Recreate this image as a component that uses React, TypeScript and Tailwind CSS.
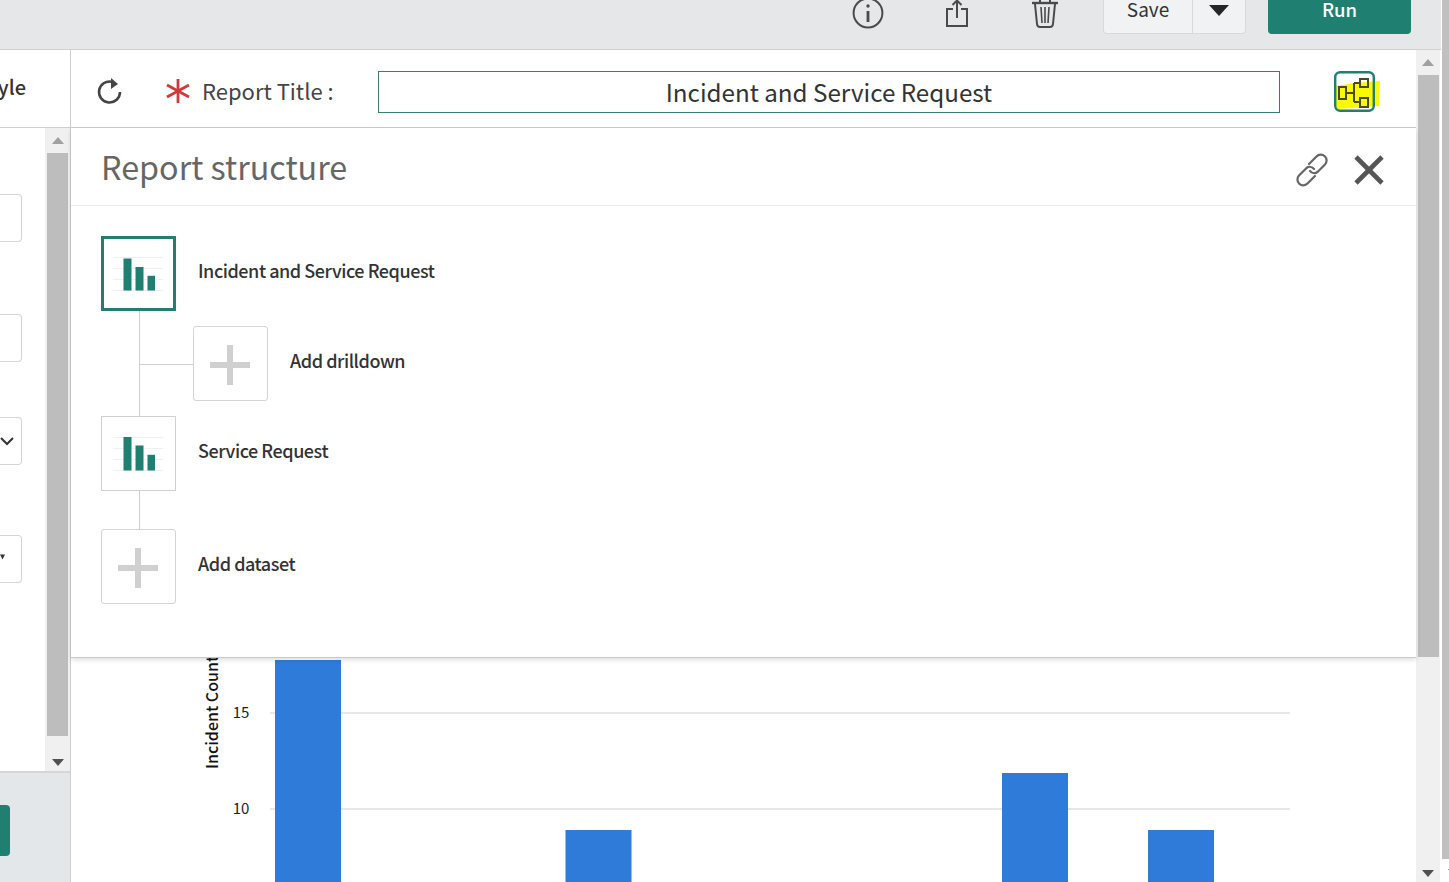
const font = { fontFamily: '"Noto Sans CJK SC", "Source Sans Pro", sans-serif' };

function ChartGlyph({ bars }: { bars: number[] }) {
  return (
    <svg width="56" height="56" viewBox="0 0 56 56">
      <g stroke="#f0f0f0" strokeWidth="1">
        <line x1="2" y1="11.5" x2="52" y2="11.5" />
        <line x1="2" y1="22.5" x2="52" y2="22.5" />
        <line x1="2" y1="33.5" x2="52" y2="33.5" />
        <line x1="2" y1="44.5" x2="52" y2="44.5" />
      </g>
      <rect x="12.5" y={44.5 - bars[0]} width="8" height={bars[0]} fill="#1f7f70" />
      <rect x="24.5" y={44.5 - bars[1]} width="8" height={bars[1]} fill="#1f7f70" />
      <rect x="36.5" y={44.5 - bars[2]} width="7.5" height={bars[2]} fill="#1f7f70" />
    </svg>
  );
}

function PlusGlyph() {
  return (
    <svg width="40" height="40" viewBox="0 0 40 40">
      <rect x="0" y="17" width="40" height="6" fill="#d0d0d0" />
      <rect x="17" y="0" width="6" height="40" fill="#d0d0d0" />
    </svg>
  );
}

function ScrollArrow({ up, className }: { up?: boolean; className?: string }) {
  return (
    <svg width="12" height="7" viewBox="0 0 12 7" className={className}>
      <path d={up ? 'M0 7 L6 0 L12 7 Z' : 'M0 0 L6 7 L12 0 Z'} fill={up ? '#a0a0a0' : '#505050'} />
    </svg>
  );
}

function LeftField({ children, mt }: { children?: React.ReactNode; mt: string }) {
  return (
    <div className={`${mt} flex h-[48px] w-[22px] items-center justify-end rounded-r-[4px] border border-l-0 border-[#d4d4d4] bg-white`}>
      {children}
    </div>
  );
}

function NodeLabel({ children }: { children: React.ReactNode }) {
  return <span className="ml-[22px] pb-[7px] text-[18px] font-medium leading-none tracking-[-0.45px]">{children}</span>;
}

export default function App() {
  return (
    <div className="flex h-[882px] w-[1449px] overflow-hidden bg-white text-[#333]" style={font}>
      <div className="flex w-[1441px] shrink-0 flex-col">
        {/* top toolbar, cut by the top of the window */}
        <header className="flex h-[50px] shrink-0 items-end justify-end border-b border-[#cfd1d3] bg-[#e6e7e9] pb-[15px] pr-[30px]">
          <div className="mb-[2px] mr-[44px] flex h-[32px] items-end gap-[61px]">
            <svg width="32" height="32" viewBox="0 0 32 32" fill="none" stroke="#4a4a4a" strokeWidth="2">
              <circle cx="16" cy="13" r="14.4" />
              <line x1="16" y1="11" x2="16" y2="22" strokeWidth="2.8" />
              <circle cx="16" cy="6" r="1.7" fill="#4a4a4a" stroke="none" />
            </svg>
            <svg width="24" height="32" viewBox="0 0 24 32" fill="none" stroke="#4a4a4a" strokeWidth="2">
              <path d="M8 9 H2 V26 H22 V9 H16" />
              <path d="M12 18 V1 M7.5 5 L12 0.5 L16.5 5" />
            </svg>
            <svg width="28" height="32" viewBox="0 0 28 32" fill="none" stroke="#4a4a4a" strokeWidth="2" className="ml-px">
              <path d="M1 3 H27" strokeWidth="2.4" />
              <path d="M9 3 V0 M19 3 V0" />
              <path d="M4 4 L6 24 Q6.3 27 9 27 H19 Q21.7 27 22 24 L24 4" />
              <path d="M10 7 L11 23 M14 7 V23 M18 7 L17 23" strokeWidth="1.6" />
            </svg>
          </div>
          <div className="flex h-[40px] w-[143px] items-stretch rounded-b-[4px] border border-t-0 border-[#d8d9db] bg-[#f1f2f3] text-[19px] leading-none text-[#333]">
            <div className="flex w-[89px] items-center justify-center border-r border-[#d8d9db] pb-[10px]">Save</div>
            <div className="flex flex-1 items-center justify-center pb-[6px]">
              <svg width="20" height="11" viewBox="0 0 20 11">
                <path d="M0 0 H20 L10 11 Z" fill="#262626" />
              </svg>
            </div>
          </div>
          <div className="ml-[22px] flex h-[40px] w-[143px] items-center justify-center rounded-b-[4px] bg-[#1f7f70] pb-[10px] text-[18.5px] font-medium leading-none text-white">
            Run
          </div>
        </header>

        <div className="flex min-h-0 flex-1">
          {/* left settings column */}
          <aside className="flex w-[71px] shrink-0 flex-col border-r border-[#cdcdcd]">
            <div className="flex h-[78px] shrink-0 items-center justify-end border-b border-[#cdcdcd] pb-[3px] pr-[44px] text-[20px] font-medium leading-none">
              yle
            </div>
            <div className="flex h-[645px] shrink-0 border-b-2 border-[#d6d6d6]">
              <div className="w-[45px] shrink-0">
                <LeftField mt="mt-[66px]" />
                <LeftField mt="mt-[72px]" />
                <LeftField mt="mt-[55px]">
                  <svg width="14" height="9" viewBox="0 0 14 9" fill="none" stroke="#333" strokeWidth="2" className="mr-[7px]">
                    <path d="M1 1 L7 7 L13 1" />
                  </svg>
                </LeftField>
                <LeftField mt="mt-[70px]">
                  <svg width="6" height="6" viewBox="0 0 6 6" className="mb-[4px] mr-[16px]">
                    <path d="M0 0 H6 L3 6 Z" fill="#333" />
                  </svg>
                </LeftField>
              </div>
              <div className="flex w-[25px] shrink-0 flex-col items-center bg-[#f0f0f0]">
                <div className="flex h-[25px] shrink-0 items-center justify-center">
                  <ScrollArrow up />
                </div>
                <div className="h-[583px] w-[21px] shrink-0 bg-[#bdbdbd]" />
                <div className="flex flex-1 items-end justify-center pb-[5px]">
                  <ScrollArrow />
                </div>
              </div>
            </div>
            <div className="flex flex-1 items-start bg-[#e4e7ea] pt-[32px]">
              <div className="h-[51px] w-[10px] rounded-r-[4px] bg-[#1f7f70]" />
            </div>
          </aside>

          {/* main area */}
          <div className="flex min-w-0 flex-1 flex-col">
            <div className="flex h-[78px] shrink-0 items-center border-b border-[#cdcdcd] pl-[26px] pt-[7px]">
              <svg width="26" height="30" viewBox="0 0 26 30" fill="none" stroke="#444" strokeWidth="2.6">
                <path d="M15 4.8 A10.5 10.5 0 1 0 23 15" />
                <path d="M14 1 L21 7 L14 12 Z" fill="#444" stroke="none" />
              </svg>
              <svg width="26" height="26" viewBox="0 0 26 26" stroke="#d0393a" strokeWidth="2.8" className="mb-[2px] ml-[42px]">
                <line x1="13" y1="1" x2="13" y2="25" />
                <line x1="2" y1="7" x2="24" y2="19" />
                <line x1="24" y1="7" x2="2" y2="19" />
              </svg>
              <span className="ml-[11px] w-[176px] whitespace-pre pb-[4px] text-[22px] leading-none text-[#444]">Report Title :</span>
              <div className="flex h-[42px] w-[902px] items-center justify-center border border-[#3a7b76] text-[24.2px] leading-none text-[#333]">
                Incident and Service Request
              </div>
              <svg width="48" height="42" viewBox="0 0 48 42" fill="none" className="ml-[54px] overflow-visible">
                <path d="M2 15 L20 12 L46 10 L45 35 L20 37 L2 38 Z" fill="#f8fb00" />
                <rect x="1.2" y="1.2" width="38.6" height="38.6" rx="5" stroke="#1f7f70" strokeWidth="2.4" />
                <g stroke="#4a4a2a" strokeWidth="2">
                  <rect x="5" y="16" width="7" height="12" />
                  <rect x="26" y="8" width="8" height="8" />
                  <rect x="26" y="27" width="8" height="9" />
                  <path d="M12 22 H20 M20 12 V31 M20 12 H26 M20 31 H26" />
                </g>
              </svg>
            </div>

            <div className="relative z-10 flex h-[530px] shrink-0 flex-col border-b border-[#c9c9c9] bg-white shadow-[0_2px_5px_rgba(0,0,0,0.13)]">
              <div className="flex h-[78px] shrink-0 items-center justify-between border-b border-[#ebebeb] pl-[30px] pr-[32px]">
                <span className="text-[32.3px] leading-none text-[#666]">Report structure</span>
                <div className="flex items-center gap-[25px] pt-[6px]">
                  <svg width="34" height="34" viewBox="0 0 34 34" fill="none" stroke="#666" strokeWidth="2.2" strokeLinecap="round">
                    <path d="M14 11 L21.5 3.5 A5.5 5.5 0 0 1 30 11.5 L22.5 19 A5.5 5.5 0 0 1 15 18" />
                    <path d="M20 23 L12.5 30.5 A5.5 5.5 0 0 1 4 22.5 L11.5 15 A5.5 5.5 0 0 1 19 16" />
                  </svg>
                  <svg width="30" height="30" viewBox="0 0 30 30" stroke="#555" strokeWidth="4.6">
                    <line x1="2" y1="2" x2="28" y2="28" />
                    <line x1="28" y1="2" x2="2" y2="28" />
                  </svg>
                </div>
              </div>

              {/* tree of datasets */}
              <div className="pl-[30px] pt-[30px]">
                <div className="flex items-center">
                  <div className="flex h-[75px] w-[75px] shrink-0 items-center justify-center border-[3px] border-[#1f7f70]">
                    <ChartGlyph bars={[32, 23.5, 14.7]} />
                  </div>
                  <NodeLabel>Incident and Service Request</NodeLabel>
                </div>

                <div className="flex h-[105px] items-start">
                  <div className="ml-[38px] flex h-full items-start">
                    <div className="h-full w-px bg-[#d0d0d0]" />
                    <div className="mt-[53px] h-px w-[53px] bg-[#d0d0d0]" />
                  </div>
                  <div className="mt-[15px] flex h-[75px] items-center">
                    <div className="flex h-[75px] w-[75px] shrink-0 items-center justify-center rounded-[3px] border border-[#d4d4d4] pr-px pt-[2px]">
                      <PlusGlyph />
                    </div>
                    <NodeLabel>Add drilldown</NodeLabel>
                  </div>
                </div>

                <div className="flex items-center">
                  <div className="flex h-[75px] w-[75px] shrink-0 items-center justify-center border border-[#d0d0d0]">
                    <ChartGlyph bars={[33.5, 25, 15.7]} />
                  </div>
                  <NodeLabel>Service Request</NodeLabel>
                </div>

                <div className="ml-[38px] h-[38px] w-px bg-[#d0d0d0]" />

                <div className="flex items-center">
                  <div className="flex h-[75px] w-[75px] shrink-0 items-center justify-center rounded-[3px] border border-[#d4d4d4] pr-px pt-[2px]">
                    <PlusGlyph />
                  </div>
                  <NodeLabel>Add dataset</NodeLabel>
                </div>
              </div>
            </div>

            {/* chart behind the panel */}
            <svg width="1345" height="224" viewBox="71 658 1345 224" className="shrink-0">
              <line x1="270" y1="713" x2="1290" y2="713" stroke="#d0d0d0" />
              <line x1="270" y1="809" x2="1290" y2="809" stroke="#d0d0d0" />
              <text x="241" y="718" textAnchor="middle" fontSize="15" fill="#222">15</text>
              <text x="241" y="814" textAnchor="middle" fontSize="15" fill="#222">10</text>
              <text x="0" y="0" transform="translate(218 769) rotate(-90)" fontSize="16" fontWeight="500" fill="#111">Incident Count</text>
              <rect x="275" y="660" width="66" height="222" fill="#2e7bd9" />
              <rect x="565.5" y="830" width="66" height="52" fill="#2e7bd9" />
              <rect x="1002" y="773" width="66" height="109" fill="#2e7bd9" />
              <rect x="1148" y="830" width="66" height="52" fill="#2e7bd9" />
            </svg>
          </div>

          {/* inner page scrollbar */}
          <div className="mr-px flex w-[24px] shrink-0 flex-col items-center bg-[#f0f0f0]">
            <div className="flex h-[25px] shrink-0 items-center justify-center">
              <ScrollArrow up />
            </div>
            <div className="h-[582px] w-[21px] shrink-0 bg-[#bdbdbd]" />
            <div className="flex flex-1 items-end justify-center pb-[5px]">
              <ScrollArrow />
            </div>
          </div>
        </div>
      </div>

      {/* outer page scrollbar */}
      <div className="ml-px flex w-[7px] shrink-0 flex-col overflow-hidden">
        <div className="h-[859px] w-full shrink-0 bg-[#c0c0c0]" />
        <div className="pl-[6px] pt-[10px]">
          <ScrollArrow />
        </div>
      </div>
    </div>
  );
}
